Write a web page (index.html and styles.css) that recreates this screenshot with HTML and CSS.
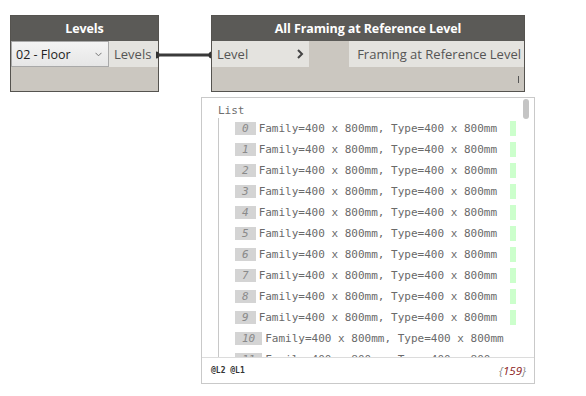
FILE: index.html
```html
<!DOCTYPE html>
<html>
<head>
<meta charset="utf-8">
<link rel="stylesheet" href="styles.css">
</head>
<body>
<div class="canvas">
  <div class="node levels">
    <div class="hdr">Levels</div>
    <div class="row">
      <div class="dropdown"><span>02 - Floor</span><svg class="dd-arrow" width="7" height="5" viewBox="0 0 7 5"><path d="M0.5 0.8 L3.5 3.8 L6.5 0.8" fill="none" stroke="#777" stroke-width="1"/></svg></div>
      <div class="port out">Levels</div>
    </div>
    <div class="foot"></div>
  </div>

  <svg class="wire" width="60" height="12" viewBox="0 0 60 12">
    <path d="M0 2.5 A3.5 3.5 0 0 1 0 9.5 Z" fill="#333"/>
    <line x1="2" y1="6" x2="56" y2="6" stroke="#3a3a3a" stroke-width="3"/>
    <path d="M56 2.5 A3.5 3.5 0 0 0 56 9.5 Z" fill="#333"/>
  </svg>

  <div class="node framing">
    <div class="hdr">All Framing at Reference Level</div>
    <div class="row">
      <div class="port in">Level<svg class="chev" width="7" height="10" viewBox="0 0 7 10"><path d="M1 1 L5 5 L1 9" fill="none" stroke="#444" stroke-width="2"/></svg></div>
      <div class="gap"></div>
      <div class="port out wide">Framing at Reference Level</div>
    </div>
    <div class="foot"><span class="bar"></span></div>
  </div>

  <div class="watch">
    <div class="watch-body">
      <div class="list-title">List</div>
      <div class="tree">
        <div class="item"><span class="idx">0</span><span class="val">Family=400 x 800mm, Type=400 x 800mm</span><span class="id">1</span></div>
        <div class="item"><span class="idx">1</span><span class="val">Family=400 x 800mm, Type=400 x 800mm</span><span class="id">1</span></div>
        <div class="item"><span class="idx">2</span><span class="val">Family=400 x 800mm, Type=400 x 800mm</span><span class="id">1</span></div>
        <div class="item"><span class="idx">3</span><span class="val">Family=400 x 800mm, Type=400 x 800mm</span><span class="id">1</span></div>
        <div class="item"><span class="idx">4</span><span class="val">Family=400 x 800mm, Type=400 x 800mm</span><span class="id">1</span></div>
        <div class="item"><span class="idx">5</span><span class="val">Family=400 x 800mm, Type=400 x 800mm</span><span class="id">1</span></div>
        <div class="item"><span class="idx">6</span><span class="val">Family=400 x 800mm, Type=400 x 800mm</span><span class="id">1</span></div>
        <div class="item"><span class="idx">7</span><span class="val">Family=400 x 800mm, Type=400 x 800mm</span><span class="id">1</span></div>
        <div class="item"><span class="idx">8</span><span class="val">Family=400 x 800mm, Type=400 x 800mm</span><span class="id">1</span></div>
        <div class="item"><span class="idx">9</span><span class="val">Family=400 x 800mm, Type=400 x 800mm</span><span class="id">1</span></div>
        <div class="item"><span class="idx">10</span><span class="val">Family=400 x 800mm, Type=400 x 800mm</span><span class="id">1</span></div>
        <div class="item"><span class="idx">11</span><span class="val">Family=400 x 800mm, Type=400 x 800mm</span><span class="id">1</span></div>
      </div>
    </div>
    <div class="scroll"></div>
    <div class="watch-foot">
      <span class="levels-tag">@L2 @L1</span>
      <span class="count"><span class="brace">{</span><span class="num">159</span><span class="brace">}</span></span>
    </div>
  </div>
</div>
</body>
</html>
```

FILE: styles.css
```css
html, body {
  margin: 0;
  padding: 0;
  background: #ffffff;
}
.canvas {
  position: relative;
  width: 586px;
  height: 396px;
  overflow: hidden;
  font-family: "Open Sans", "Noto Sans", sans-serif;
}
.node {
  position: absolute;
  top: 15px;
  display: flex;
  flex-direction: column;
  border: 1px solid #55534f;
  box-sizing: border-box;
  background: #cbc7c0;
}
.levels {
  left: 10px;
  width: 149px;
}
.framing {
  left: 211px;
  width: 314px;
}
.framing::before,
.framing::after {
  content: "";
  position: absolute;
  border: 1px solid #b0b0b0;
  border-bottom: none;
  background: #f2f2f2;
  z-index: -1;
}
.framing::before {
  left: 3px;
  right: 3px;
  top: -5px;
  height: 8px;
}
.framing::after {
  left: 1px;
  right: 1px;
  top: -3px;
  height: 6px;
}
.hdr {
  height: 25px;
  background: #5b5a57;
  color: #ffffff;
  font-weight: 700;
  font-size: 12.5px;
  display: flex;
  align-items: center;
  justify-content: center;
  letter-spacing: -0.1px;
}
.row {
  height: 26px;
  display: flex;
  align-items: stretch;
}
.foot {
  height: 24px;
  position: relative;
}
.dropdown {
  width: 98px;
  box-sizing: border-box;
  border: 1px solid #a9a9a9;
  background: linear-gradient(#f4f4f4, #e6e6e6);
  display: flex;
  align-items: center;
  justify-content: space-between;
  padding: 0 6px 0 4px;
  font-size: 12.5px;
  color: #222;
}
.port {
  background: #e4e3df;
  color: #555;
  font-size: 13px;
  display: flex;
  align-items: center;
}
.levels .port.out {
  flex: 1;
  padding-left: 5px;
}
.port.in {
  width: 97px;
  padding-left: 5px;
  box-sizing: border-box;
  justify-content: space-between;
  padding-right: 5px;
}
.gap {
  width: 40px;
}
.port.wide {
  flex: 1;
  justify-content: flex-end;
  padding-right: 3px;
}
.bar {
  position: absolute;
  right: 5px;
  top: 9px;
  width: 1px;
  height: 7px;
  background: #555;
}
.wire {
  position: absolute;
  left: 156px;
  top: 49px;
}
.watch {
  position: absolute;
  left: 201px;
  top: 97px;
  width: 334px;
  height: 287px;
  box-sizing: border-box;
  border: 1px solid #c9c9c9;
  background: #ffffff;
  display: flex;
  flex-direction: column;
}
.watch-body {
  height: 259px;
  position: relative;
  overflow: hidden;
  width: 314px;
  flex: none;
  font-family: "DejaVu Sans Mono", "Liberation Mono", monospace;
  font-size: 11px;
  color: #6e6e6e;
}
.list-title {
  position: absolute;
  left: 16px;
  top: 6px;
  line-height: 14px;
}
.tree {
  position: absolute;
  left: 16px;
  top: 20px;
  bottom: 0;
  border-left: 1px solid #c8c8c8;
  padding-left: 16px;
  padding-top: 0;
  white-space: nowrap;
}
.item {
  height: 21px;
  display: flex;
  align-items: center;
}
.idx {
  background: #d4d4d4;
  color: #8a8a8a;
  font-style: italic;
  padding: 0 7px;
  text-align: center;
  line-height: 13px;
  margin-right: 3px;
}
.val {
  color: #6a6a6a;
}
.id {
  background: #ccffcc;
  color: #9a9a9a;
  margin-left: 13px;
  padding: 0 5px;
  line-height: 15px;
  min-width: 20px;
}
.scroll {
  position: absolute;
  left: 321px;
  top: 1px;
  width: 6px;
  height: 20px;
  border-radius: 3px;
  background: #c4c4c4;
}
.watch-foot {
  flex: 1;
  border-top: 1px solid #dcdcdc;
  display: flex;
  align-items: center;
  justify-content: space-between;
  padding: 0 8px 0 9px;
}
.levels-tag {
  font-family: "DejaVu Sans Mono", monospace;
  font-size: 8px;
  color: #333;
  font-weight: 700;
}
.count {
  font-family: "Open Sans", sans-serif;
  font-style: italic;
  font-size: 11.5px;
}
.brace {
  color: #888;
}
.num {
  color: #8b1a1a;
}
```
